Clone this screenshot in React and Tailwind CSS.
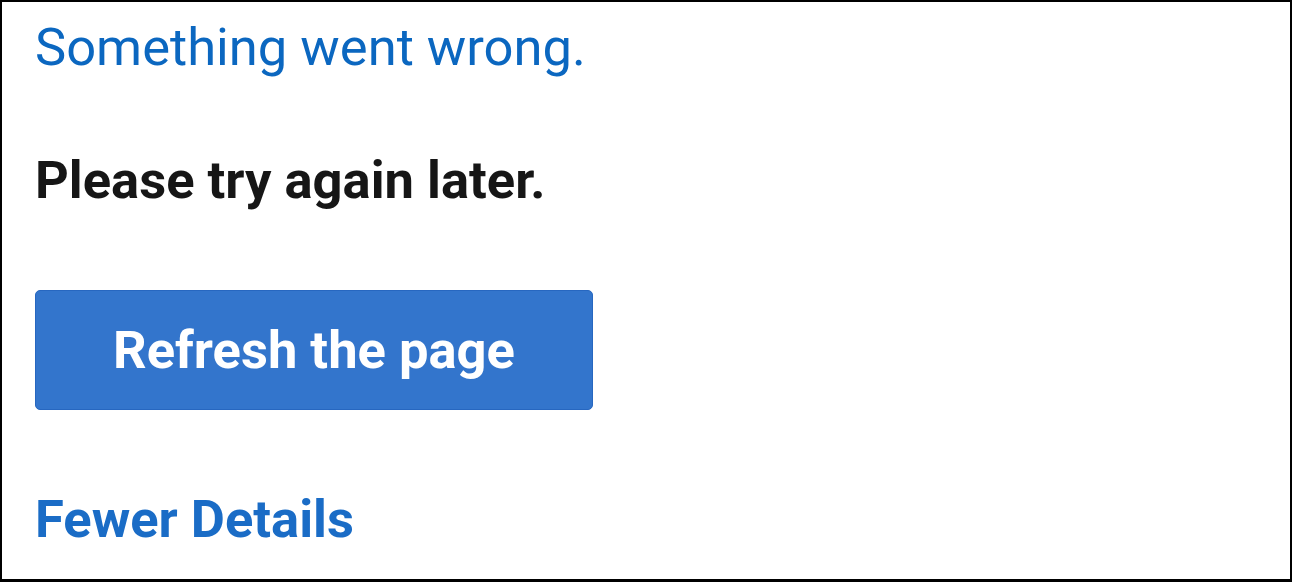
import React from 'react';

export default function App() {
  return (
    <div className="h-[582px] w-[1292px] overflow-hidden bg-white">
      <div
        className="flex h-full flex-col items-start border-2 border-b-[3px] border-black bg-white pl-[33px]"
        style={{ fontFamily: 'Roboto, "Liberation Sans", sans-serif' }}
      >
        <h1 className="mt-[14px] text-[52.5px] font-normal leading-[62px] text-[#0b67c0]">
          Something went wrong.
        </h1>
        <p className="mt-[71px] text-[52.5px] font-bold leading-[62px] text-[#161616]">
          Please try again later.
        </p>
        <button
          type="button"
          className="mt-[79px] flex h-[120px] w-[558px] items-center justify-center rounded-[5px] border border-[#2767c0] bg-[#3375cc] text-[52.5px] font-bold leading-[62px] text-white"
        >
          Refresh the page
        </button>
        <button
          type="button"
          className="mt-[78px] text-[52.5px] font-bold leading-[62px] text-[#1a6cc6]"
        >
          Fewer Details
        </button>
      </div>
    </div>
  );
}
